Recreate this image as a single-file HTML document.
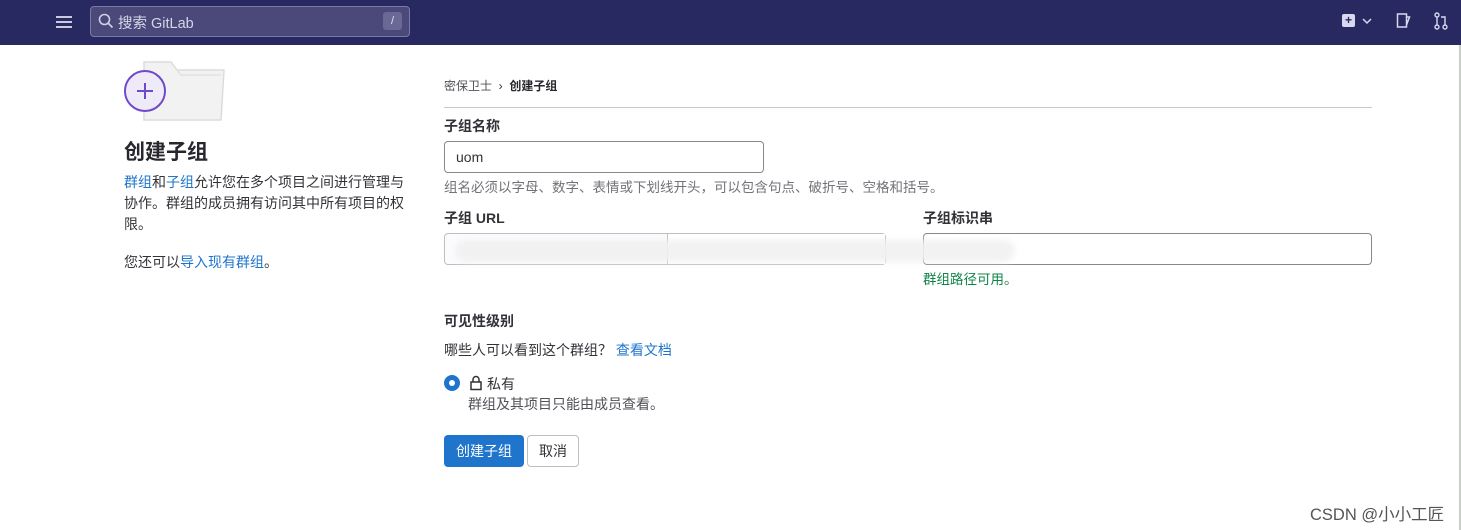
<!DOCTYPE html>
<html><head><meta charset="utf-8"><style>
*{margin:0;padding:0;box-sizing:border-box}
body{width:1461px;height:530px;background:#fff;font-family:"Liberation Sans","Noto Sans CJK SC",sans-serif;color:#333238;position:relative;overflow:hidden;font-size:14px}
.a{position:absolute}
.nav{left:0;top:0;width:1461px;height:45px;background:#292961}
.blue{color:#1f75cb}
.box{border:1px solid #89888d;border-radius:4px;background:#fff}
</style></head><body>
<div class="a nav"></div>
<svg class="a" style="left:55px;top:15px" width="18" height="14"><path d="M1 2h16M1 7h16M1 12h16" stroke="#e0e0f0" stroke-width="1.8"/></svg>
<div class="a" style="left:90px;top:6px;width:320px;height:31px;background:#4a4979;border:1px solid #7a79a8;border-radius:4px"></div>
<svg class="a" style="left:98px;top:13px" width="16" height="16"><circle cx="6.5" cy="6.5" r="5" fill="none" stroke="#d0d0e6" stroke-width="1.6"/><path d="M10 10l4.5 4.5" stroke="#d0d0e6" stroke-width="1.6"/></svg>
<div class="a" style="left:118px;top:12px;color:#d6d5ea;font-size:14.5px">搜索 GitLab</div>
<div class="a" style="left:383px;top:12px;width:19px;height:18px;background:#6a6996;border-radius:3px;color:#e0e0f0;font-size:11px;text-align:center;line-height:18px">/</div>
<div class="a" style="left:1342px;top:14px;width:13px;height:13px;background:#d8d8f0;border-radius:2px;color:#292961;font-size:12px;font-weight:bold;line-height:13px;text-align:center">+</div>
<svg class="a" style="left:1362px;top:17px" width="10" height="8"><path d="M1 2l4 4 4-4" stroke="#d8d8f0" stroke-width="1.5" fill="none"/></svg>
<svg class="a" style="left:1396px;top:12px" width="16" height="18"><path d="M1.5 2h9v13h-9zM10.5 5l3 0-3 8" stroke="#d8d8f0" stroke-width="1.5" fill="none"/></svg>
<svg class="a" style="left:1434px;top:12px" width="20" height="18"><circle cx="3" cy="3" r="2" fill="none" stroke="#d8d8f0" stroke-width="1.4"/><circle cx="3" cy="15" r="2" fill="none" stroke="#d8d8f0" stroke-width="1.4"/><circle cx="11" cy="15" r="2" fill="none" stroke="#d8d8f0" stroke-width="1.4"/><path d="M3 5v8M11 13V5H7" stroke="#d8d8f0" stroke-width="1.4" fill="none"/></svg>
<div class="a" style="left:1459px;top:45px;width:2px;height:485px;background:#c8d0c8"></div>

<svg class="a" style="left:122px;top:60px" width="106" height="62"><path d="M22 2h27l6 8h47l-3 50H22z" fill="#f2f2f2" stroke="#dcdcdc" stroke-width="1.5"/><path d="M55 10l4 5h40" fill="none" stroke="#e2e2e2" stroke-width="1.5"/><circle cx="23" cy="31" r="20" fill="#eeeaf8" stroke="#6e49cb" stroke-width="2"/><path d="M23 23v16M15 31h16" stroke="#6e49cb" stroke-width="2"/></svg>
<div class="a" style="left:124px;top:136px;font-size:21px;font-weight:bold;color:#28272d">创建子组</div>
<div class="a" style="left:124px;top:172px;width:284px;line-height:21px;font-size:14px"><span class="blue">群组</span>和<span class="blue">子组</span>允许您在多个项目之间进行管理与协作。群组的成员拥有访问其中所有项目的权限。</div>
<div class="a" style="left:124px;top:252px;font-size:14px">您还可以<span class="blue">导入现有群组</span>。</div>

<div class="a" style="left:444px;top:77px;font-size:12px;color:#535158">密保卫士 &nbsp;<span style="color:#333">›</span>&nbsp; <b style="color:#28272d">创建子组</b></div>
<div class="a" style="left:444px;top:107px;width:928px;height:1px;background:#c8c8c8"></div>
<div class="a" style="left:444px;top:116px;font-weight:bold;font-size:14px">子组名称</div>
<div class="a box" style="left:444px;top:141px;width:320px;height:32px;padding:7px 11px;font-size:14px">uom</div>
<div class="a" style="left:444px;top:176px;font-size:13.5px;color:#737278">组名必须以字母、数字、表情或下划线开头，可以包含句点、破折号、空格和括号。</div>
<div class="a" style="left:444px;top:208px;font-weight:bold;font-size:14px">子组 URL</div>
<div class="a" style="left:444px;top:233px;width:442px;height:32px;border:1px solid #bfbfc3;border-radius:4px;background:#fbfafd"></div>
<div class="a" style="left:667px;top:234px;width:218px;height:30px;background:#fff;border-left:1px solid #bfbfc3"></div>
<div class="a" style="left:923px;top:208px;font-weight:bold;font-size:14px">子组标识串</div>
<div class="a box" style="left:923px;top:233px;width:449px;height:32px"></div>
<div class="a" style="left:455px;top:240px;width:560px;height:22px;background:#f0f1f0;border-radius:11px;filter:blur(3px);opacity:.9"></div>
<div class="a" style="left:923px;top:268px;font-size:13.5px;color:#108548">群组路径可用。</div>
<div class="a" style="left:444px;top:311px;font-weight:bold;font-size:14px">可见性级别</div>
<div class="a" style="left:444px;top:340px;font-size:14px">哪些人可以看到这个群组？ <span class="blue">查看文档</span></div>
<div class="a" style="left:444px;top:375px;width:16px;height:16px;border-radius:50%;background:#1f75cb"></div>
<div class="a" style="left:449px;top:380px;width:6px;height:6px;border-radius:50%;background:#fff"></div>
<svg class="a" style="left:469px;top:375px" width="14" height="16"><path d="M4 7V4.5a3 3 0 016 0V7" fill="none" stroke="#333" stroke-width="1.5"/><rect x="2" y="7" width="10" height="7.5" fill="none" stroke="#333" stroke-width="1.5"/></svg>
<div class="a" style="left:487px;top:374px;font-size:14px">私有</div>
<div class="a" style="left:468px;top:394px;font-size:14px;color:#535158">群组及其项目只能由成员查看。</div>
<div class="a" style="left:444px;top:435px;width:80px;height:32px;background:#1f75cb;border-radius:4px;color:#fff;font-size:14px;text-align:center;line-height:32px">创建子组</div>
<div class="a" style="left:527px;top:435px;width:52px;height:32px;border:1px solid #bfbfc3;border-radius:4px;font-size:14px;text-align:center;line-height:30px">取消</div>
<div class="a" style="left:1310px;top:501px;font-size:16.5px;color:#555">CSDN @小小工匠</div>
</body></html>
